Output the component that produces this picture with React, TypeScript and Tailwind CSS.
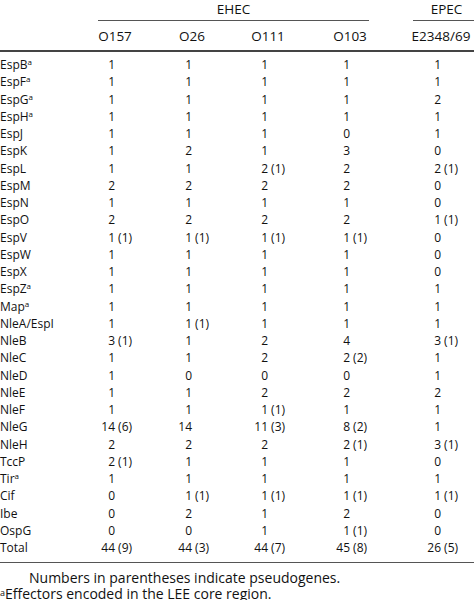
import React from "react";

type Row = { name: string; sup?: boolean; values: string[] };

const rows: Row[] = [
  { name: "EspB", sup: true, values: ["1", "1", "1", "1", "1"] },
  { name: "EspF", sup: true, values: ["1", "1", "1", "1", "1"] },
  { name: "EspG", sup: true, values: ["1", "1", "1", "1", "2"] },
  { name: "EspH", sup: true, values: ["1", "1", "1", "1", "1"] },
  { name: "EspJ", values: ["1", "1", "1", "0", "1"] },
  { name: "EspK", values: ["1", "2", "1", "3", "0"] },
  { name: "EspL", values: ["1", "1", "2 (1)", "2", "2 (1)"] },
  { name: "EspM", values: ["2", "2", "2", "2", "0"] },
  { name: "EspN", values: ["1", "1", "1", "1", "0"] },
  { name: "EspO", values: ["2", "2", "2", "2", "1 (1)"] },
  { name: "EspV", values: ["1 (1)", "1 (1)", "1 (1)", "1 (1)", "0"] },
  { name: "EspW", values: ["1", "1", "1", "1", "0"] },
  { name: "EspX", values: ["1", "1", "1", "1", "0"] },
  { name: "EspZ", sup: true, values: ["1", "1", "1", "1", "1"] },
  { name: "Map", sup: true, values: ["1", "1", "1", "1", "1"] },
  { name: "NleA/EspI", values: ["1", "1 (1)", "1", "1", "1"] },
  { name: "NleB", values: ["3 (1)", "1", "2", "4", "3 (1)"] },
  { name: "NleC", values: ["1", "1", "2", "2 (2)", "1"] },
  { name: "NleD", values: ["1", "0", "0", "0", "1"] },
  { name: "NleE", values: ["1", "1", "2", "2", "2"] },
  { name: "NleF", values: ["1", "1", "1 (1)", "1", "1"] },
  { name: "NleG", values: ["14 (6)", "14", "11 (3)", "8 (2)", "1"] },
  { name: "NleH", values: ["2", "2", "2", "2 (1)", "3 (1)"] },
  { name: "TccP", values: ["2 (1)", "1", "1", "1", "0"] },
  { name: "Tir", sup: true, values: ["1", "1", "1", "1", "1"] },
  { name: "Cif", values: ["0", "1 (1)", "1 (1)", "1 (1)", "1 (1)"] },
  { name: "Ibe", values: ["0", "2", "1", "2", "0"] },
  { name: "OspG", values: ["0", "0", "1", "1 (1)", "0"] },
  { name: "Total", values: ["44 (9)", "44 (3)", "44 (7)", "45 (8)", "26 (5)"] },
];

const strains = ["O157", "O26", "O111", "O103", "E2348/69"];

const cols = "grid grid-cols-[78px_74px_80px_72px_92px_90px]";

// number right-aligned on the column centre, pseudogene count after it
const Cell: React.FC<{ value: string }> = ({ value }) => {
  const [num, ...rest] = value.split(" ");
  return (
    <div className="grid grid-cols-2">
      <span className="text-right">{num}</span>
      <span className="whitespace-pre">{rest.length ? " " + rest.join(" ") : ""}</span>
    </div>
  );
};

const Sup: React.FC = () => <sup className="text-[8px] -top-[0.5em]">a</sup>;

export default function App() {
  return (
    <div className="w-[474px] h-[600px] overflow-hidden bg-white text-[#111] font-['Open_Sans',sans-serif]">
      <div className="w-[486px]">
        <div className="flex h-[21px] text-[13.5px] leading-[19px]">
          <div className="w-[98px]" />
          <div className="w-[271px] border-b-[1.5px] border-[#555] text-center">EHEC</div>
          <div className="w-[44px]" />
          <div className="w-[73px] border-b-[1.5px] border-[#555] text-center pr-[6px]">EPEC</div>
        </div>
        <div className={`${cols} h-[31px] items-center text-[13.5px] border-b-2 border-[#444]`}>
          <div />
          {strains.map((s) => (
            <div key={s} className="text-center pt-[1px]">
              {s}
            </div>
          ))}
        </div>
        <div className="pt-[4px] pb-[6px] text-[12px] border-b-[1.5px] border-[#555]">
          {rows.map((r) => (
            <div key={r.name} className={`${cols} h-[17.25px] items-center leading-[17px]`}>
              <div className="whitespace-nowrap">
                {r.name}
                {r.sup && <Sup />}
              </div>
              {r.values.map((v, i) => (
                <Cell key={i} value={v} />
              ))}
            </div>
          ))}
        </div>
        <div className="pt-[7px] text-[14px] leading-[16px]">
          <p className="pl-[29px]">Numbers in parentheses indicate pseudogenes.</p>
          <p>
            <sup className="text-[9px] -top-[0.4em]">a</sup>Effectors encoded in the LEE core region.
          </p>
        </div>
      </div>
    </div>
  );
}
